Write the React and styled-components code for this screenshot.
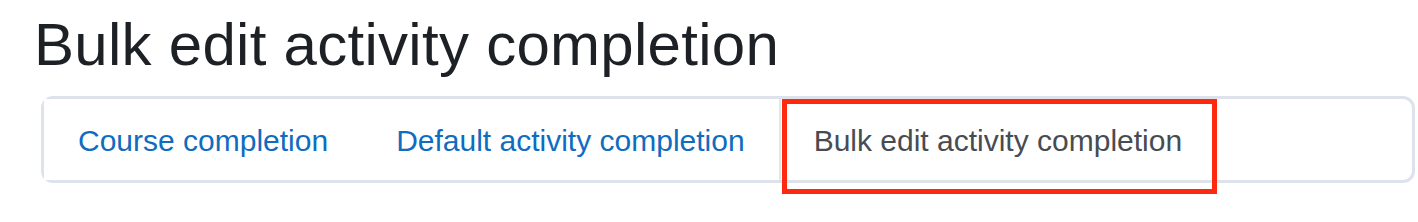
import React from "react";
import styled, { createGlobalStyle } from "styled-components";

const GlobalStyle = createGlobalStyle`
  html, body {
    margin: 0;
    padding: 0;
    background: #ffffff;
  }
  body {
    font-family: "Liberation Sans", Arial, Helvetica, sans-serif;
    -webkit-font-smoothing: antialiased;
  }
`;

const Page = styled.div`
  box-sizing: border-box;
  min-height: 222px;
  padding: 9px 3px 0 41px;
  display: flex;
  flex-direction: column;
  gap: 15px;
`;

const Heading = styled.h1`
  margin: 0 0 0 -7px;
  font-size: 60px;
  line-height: 72px;
  font-weight: 400;
  color: #1d2125;
  letter-spacing: 0.28px;
`;

const TabBar = styled.nav`
  display: flex;
  align-items: stretch;
  height: 81px;
  border: 3px solid #dee3eb;
  border-radius: 12px;
`;

const Tab = styled.a`
  position: relative;
  display: flex;
  align-items: center;
  padding: 3px 34px 0 ${(p) => (p.$active ? "33px" : "34px")};
  font-size: 30px;
  line-height: 36px;
  text-decoration: none;
  white-space: nowrap;
  color: ${(p) => (p.$active ? "#474c52" : "#0f6cbf")};
  background: #ffffff;
  border-left: ${(p) => (p.$active ? "2px solid #e3e7ec" : "none")};
  cursor: pointer;
`;

const Highlight = styled.span`
  position: absolute;
  top: 0;
  left: 1px;
  right: -1px;
  bottom: -14px;
  border: 5px solid #fe2a10;
  pointer-events: none;
`;

const tabs = [
  { label: "Course completion" },
  { label: "Default activity completion" },
  { label: "Bulk edit activity completion", active: true },
];

export default function App() {
  return (
    <>
      <GlobalStyle />
      <Page>
        <Heading>Bulk edit activity completion</Heading>
        <TabBar>
          {tabs.map((t) => (
            <Tab key={t.label} $active={t.active}>
              {t.label}
              {t.active && <Highlight />}
            </Tab>
          ))}
        </TabBar>
      </Page>
    </>
  );
}
